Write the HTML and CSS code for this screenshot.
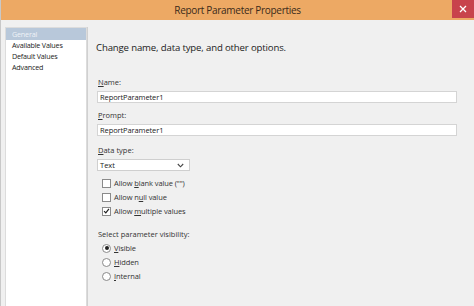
FILE: index.html
```html
<!DOCTYPE html>
<html>
<head>
<meta charset="utf-8">
<link rel="stylesheet" href="styles.css">
</head>
<body>
<div class="window">
  <div class="titlebar">
    <span class="title">Report Parameter Properties</span>
    <div class="close"><svg width="8" height="8" viewBox="0 0 8 8"><path d="M1 1L7 7M7 1L1 7" stroke="#fff" stroke-width="1.3"/></svg></div>
  </div>
  <div class="main">
    <div class="nav">
      <div class="nav-item selected">General</div>
      <div class="nav-item">Available Values</div>
      <div class="nav-item">Default Values</div>
      <div class="nav-item">Advanced</div>
    </div>
    <div class="content">
      <div class="heading">Change name, data type, and other options.</div>
      <div class="label label-first"><u>N</u>ame:</div>
      <div class="input">ReportParameter1</div>
      <div class="label"><u>P</u>rompt:</div>
      <div class="input">ReportParameter1</div>
      <div class="label label-dt"><u>D</u>ata type:</div>
      <div class="select"><span>Text</span><svg width="7" height="5" viewBox="0 0 7 5"><path d="M0.8 1L3.5 3.8L6.2 1" fill="none" stroke="#444" stroke-width="1.1"/></svg></div>
      <div class="checks">
        <div class="row"><span class="box"></span><span>Allow <u>b</u>lank value ("")</span></div>
        <div class="row"><span class="box"></span><span>Allow n<u>u</u>ll value</span></div>
        <div class="row"><span class="box"><svg width="8" height="8" viewBox="0 0 8 8"><path d="M1.2 4.2L3.2 6.2L6.8 1.6" fill="none" stroke="#222" stroke-width="1.4"/></svg></span><span>Allow <u>m</u>ultiple values</span></div>
      </div>
      <div class="label label-vis">Select parameter visibility:</div>
      <div class="radios">
        <div class="row"><span class="radio on"></span><span><u>V</u>isible</span></div>
        <div class="row"><span class="radio"></span><span><u>H</u>idden</span></div>
        <div class="row"><span class="radio"></span><span><u>I</u>nternal</span></div>
      </div>
    </div>
  </div>
</div>
</body>
</html>
```
FILE: styles.css
```css
html, body {
  margin: 0;
  padding: 0;
}
body {
  width: 474px;
  height: 306px;
  overflow: hidden;
  background: #f0f0f0;
  font-family: "Open Sans", "Noto Sans", sans-serif;
  color: #222;
}
.window {
  width: 474px;
  height: 306px;
  display: flex;
  flex-direction: column;
  border-left: 1px solid #c8c8c8;
  box-sizing: border-box;
}
.titlebar {
  position: relative;
  height: 20px;
  background: #eda964;
  display: flex;
  align-items: center;
  justify-content: center;
}
.title {
  font-size: 10px;
  color: #3a2a1a;
  letter-spacing: -0.3px;
}
.close {
  position: absolute;
  right: 0;
  top: 0;
  width: 22px;
  height: 18px;
  background: #c8434c;
  display: flex;
  align-items: center;
  justify-content: center;
}
.main {
  flex: 1;
  display: flex;
  padding-top: 7px;
  padding-left: 4px;
}
.nav {
  width: 80px;
  background: #fff;
  border: 1px solid #dcdcdc;
  border-bottom: none;
}
.nav-item {
  font-size: 7.2px;
  height: 11px;
  line-height: 11px;
  padding-left: 6px;
  color: #222;
  letter-spacing: -0.2px;
}
.nav-item.selected {
  background: #b8c8da;
  color: #eef2f7;
  height: 12px;
  line-height: 12px;
}
.content {
  flex: 1;
  border-left: 1px solid #d0d0d0;
  padding: 14px 17px 0 9px;
  display: flex;
  flex-direction: column;
}
.heading {
  font-size: 9.6px;
  line-height: 14px;
  height: 14px;
  color: #222;
  margin-left: -1px;
  letter-spacing: -0.15px;
}
.label {
  font-size: 7.5px;
  line-height: 12px;
  height: 12px;
  padding-left: 1px;
  margin-top: 6px;
  margin-bottom: 3px;
  color: #333;
}
.label-first { margin-top: 21px; }
.label-dt { margin-top: 8px; }
.label-vis { margin-top: 10px; margin-bottom: 1px; }
.input {
  height: 12px;
  box-sizing: border-box;
  background: #fff;
  border: 1px solid #d4d4d4;
  font-size: 7.5px;
  line-height: 10px;
  padding-left: 2px;
  color: #222;
  letter-spacing: -0.1px;
}
.select {
  width: 93px;
  height: 12px;
  box-sizing: border-box;
  background: #fff;
  border: 1px solid #cfcfcf;
  font-size: 7.5px;
  line-height: 10px;
  padding: 0 5px 0 2px;
  display: flex;
  align-items: center;
  justify-content: space-between;
  color: #222;
}
.checks {
  margin-top: 5px;
  display: flex;
  flex-direction: column;
}
.radios {
  display: flex;
  flex-direction: column;
}
.row {
  height: 14px;
  display: flex;
  align-items: center;
  font-size: 7.5px;
  color: #333;
  padding-left: 5px;
  letter-spacing: -0.1px;
}
.box {
  width: 9px;
  height: 9px;
  box-sizing: border-box;
  border: 1px solid #8a8a8a;
  background: #fff;
  margin-right: 3px;
  display: flex;
  align-items: center;
  justify-content: center;
}
.radio {
  width: 9px;
  height: 9px;
  box-sizing: border-box;
  border: 1px solid #8a8a8a;
  border-radius: 50%;
  background: #fff;
  margin-right: 3px;
  display: flex;
  align-items: center;
  justify-content: center;
}
.radio.on::after {
  content: "";
  width: 4px;
  height: 4px;
  border-radius: 50%;
  background: #222;
}
```
